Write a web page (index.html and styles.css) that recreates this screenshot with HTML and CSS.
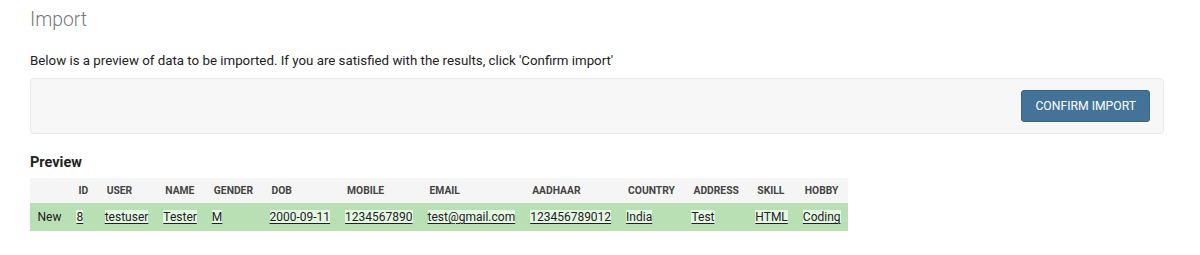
FILE: index.html
```html
<!DOCTYPE html>
<html>
<head>
<meta charset="utf-8">
<link rel="stylesheet" href="styles.css">
</head>
<body>
<div class="page">
  <h1 class="title">Import</h1>
  <p class="lead">Below is a preview of data to be imported. If you are satisfied with the results, click 'Confirm import'</p>
  <div class="well">
    <button class="btn">Confirm import</button>
  </div>
  <h3 class="sub">Preview</h3>
  <table class="preview">
    <thead>
      <tr>
        <th></th><th>ID</th><th>User</th><th>Name</th><th>Gender</th><th>DOB</th><th>Mobile</th><th>Email</th><th>Aadhaar</th><th>Country</th><th>Address</th><th>Skill</th><th>Hobby</th>
      </tr>
    </thead>
    <tbody>
      <tr class="new">
        <td>New</td>
        <td><span class="v">8</span></td>
        <td><span class="v">testuser</span></td>
        <td><span class="v">Tester</span></td>
        <td><span class="v">M</span></td>
        <td><span class="v">2000-09-11</span></td>
        <td><span class="v">1234567890</span></td>
        <td><span class="v">test@gmail.com</span></td>
        <td><span class="v">123456789012</span></td>
        <td><span class="v">India</span></td>
        <td><span class="v">Test</span></td>
        <td><span class="v">HTML</span></td>
        <td><span class="v">Coding</span></td>
      </tr>
    </tbody>
  </table>
</div>
</body>
</html>
```
FILE: styles.css
```css
html, body { margin: 0; padding: 0; background: #fff; }
body { font-family: Roboto, "Liberation Sans", sans-serif; color: #222; }
.page { padding: 8px 36px 0 30px; }
.title { margin: 0; font-size: 19.3px; font-weight: 300; color: #777; line-height: 24px; }
.lead { margin: 20px 0 0; font-size: 13.3px; line-height: 18px; color: #222; }
.well {
  margin-top: 8px;
  height: 54px;
  background: #f7f7f7;
  border: 1px solid #e9e9e9;
  border-radius: 4px;
  display: flex;
  align-items: center;
  justify-content: flex-end;
  padding: 0 13px;
}
.btn {
  font-family: Roboto, "Liberation Sans", sans-serif;
  text-transform: uppercase;
  font-size: 12.2px;
  color: #fff;
  background: #44739a;
  border: 1px solid #3a6587;
  border-radius: 3px;
  height: 32px;
  padding: 0 13px;
}
.sub { margin: 20px 0 0; font-size: 14.5px; font-weight: 700; line-height: 18px; color: #222; }
.preview { border-collapse: collapse; margin-top: 6px; font-size: 12px; }
.preview th {
  background: #f5f5f5;
  font-size: 10.3px;
  font-weight: 700;
  text-transform: uppercase;
  color: #444;
  text-align: left;
  height: 25px;
  padding: 0 9px 0 9.5px;
}
.preview td { background: #b8e0b4; height: 28px; padding: 0 7.5px; color: #222; }
.v {
  background: #e4f7e2;
  text-decoration: underline;
  text-decoration-color: #222;
  text-underline-offset: 2px;
}
```
